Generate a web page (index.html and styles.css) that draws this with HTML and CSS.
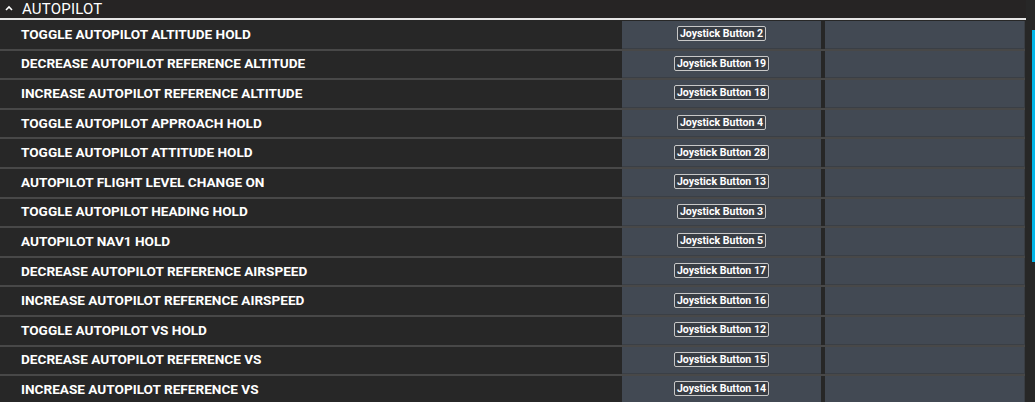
FILE: index.html
```html
<!DOCTYPE html>
<html>
<head>
<meta charset="utf-8">
<link rel="stylesheet" href="styles.css">
</head>
<body>
<div class="panel">
  <div class="header">
    <svg class="caret" width="8" height="6" viewBox="0 0 8 6"><path d="M1 5 L4 2 L7 5" fill="none" stroke="#fff" stroke-width="1.6"/></svg>
    <span class="title">AUTOPILOT</span>
  </div>
  <div class="list">
    <div class="row"><div class="label">TOGGLE AUTOPILOT ALTITUDE HOLD</div><div class="cell"><span class="badge">Joystick Button 2</span></div><div class="cell"></div></div>
    <div class="row"><div class="label">DECREASE AUTOPILOT REFERENCE ALTITUDE</div><div class="cell"><span class="badge">Joystick Button 19</span></div><div class="cell"></div></div>
    <div class="row"><div class="label">INCREASE AUTOPILOT REFERENCE ALTITUDE</div><div class="cell"><span class="badge">Joystick Button 18</span></div><div class="cell"></div></div>
    <div class="row"><div class="label">TOGGLE AUTOPILOT APPROACH HOLD</div><div class="cell"><span class="badge">Joystick Button 4</span></div><div class="cell"></div></div>
    <div class="row"><div class="label">TOGGLE AUTOPILOT ATTITUDE HOLD</div><div class="cell"><span class="badge">Joystick Button 28</span></div><div class="cell"></div></div>
    <div class="row"><div class="label">AUTOPILOT FLIGHT LEVEL CHANGE ON</div><div class="cell"><span class="badge">Joystick Button 13</span></div><div class="cell"></div></div>
    <div class="row"><div class="label">TOGGLE AUTOPILOT HEADING HOLD</div><div class="cell"><span class="badge">Joystick Button 3</span></div><div class="cell"></div></div>
    <div class="row"><div class="label">AUTOPILOT NAV1 HOLD</div><div class="cell"><span class="badge">Joystick Button 5</span></div><div class="cell"></div></div>
    <div class="row"><div class="label">DECREASE AUTOPILOT REFERENCE AIRSPEED</div><div class="cell"><span class="badge">Joystick Button 17</span></div><div class="cell"></div></div>
    <div class="row"><div class="label">INCREASE AUTOPILOT REFERENCE AIRSPEED</div><div class="cell"><span class="badge">Joystick Button 16</span></div><div class="cell"></div></div>
    <div class="row"><div class="label">TOGGLE AUTOPILOT VS HOLD</div><div class="cell"><span class="badge">Joystick Button 12</span></div><div class="cell"></div></div>
    <div class="row"><div class="label">DECREASE AUTOPILOT REFERENCE VS</div><div class="cell"><span class="badge">Joystick Button 15</span></div><div class="cell"></div></div>
    <div class="row"><div class="label">INCREASE AUTOPILOT REFERENCE VS</div><div class="cell"><span class="badge">Joystick Button 14</span></div><div class="cell"></div></div>
  </div>
  <div class="scrollbar"></div>
</div>
</body>
</html>
```
FILE: styles.css
```css
html, body {
  margin: 0;
  padding: 0;
  background: #272727;
  overflow: hidden;
}
body {
  width: 1035px;
  height: 402px;
  font-family: Roboto, "Liberation Sans", sans-serif;
  color: #fff;
}
.panel {
  position: relative;
  width: 1035px;
  height: 402px;
  background: #272727;
}
.header {
  height: 18px;
  width: 1026px;
  border-bottom: 2px solid #e6e6e6;
  display: flex;
  align-items: center;
  background: #262424;
}
.caret {
  margin-left: 5px;
  margin-right: 9px;
  margin-top: -2px;
}
.title {
  font-size: 15px;
  line-height: 18px;
  letter-spacing: 0.2px;
}
.list {
  width: 1025px;
  padding-top: 1px;
}
.row {
  height: 29.6px;
  box-sizing: border-box;
  display: flex;
  border-bottom: 2px solid #484848;
}
.label {
  flex: 1;
  padding-left: 21px;
  padding-bottom: 2px;
  display: flex;
  align-items: center;
  font-weight: bold;
  font-size: 13.6px;
  letter-spacing: 0;
}
.cell {
  width: 199px;
  background: #424953;
  display: flex;
  align-items: center;
  justify-content: center;
  border-bottom: 1px solid #3a3f46;
}
.cell + .cell {
  margin-left: 4px;
  width: 199px;
  border-right: 1px solid #3a3e44;
}
.badge {
  font-size: 10.6px;
  font-weight: bold;
  border: 1px solid #c8c8c8;
  border-radius: 2px;
  padding: 0 2px;
  line-height: 13px;
  margin-bottom: 1px;
  background: #383d44;
}
.scrollbar {
  position: absolute;
  left: 1032px;
  top: 30px;
  width: 3px;
  height: 232px;
  background: #00b4e8;
}
```
